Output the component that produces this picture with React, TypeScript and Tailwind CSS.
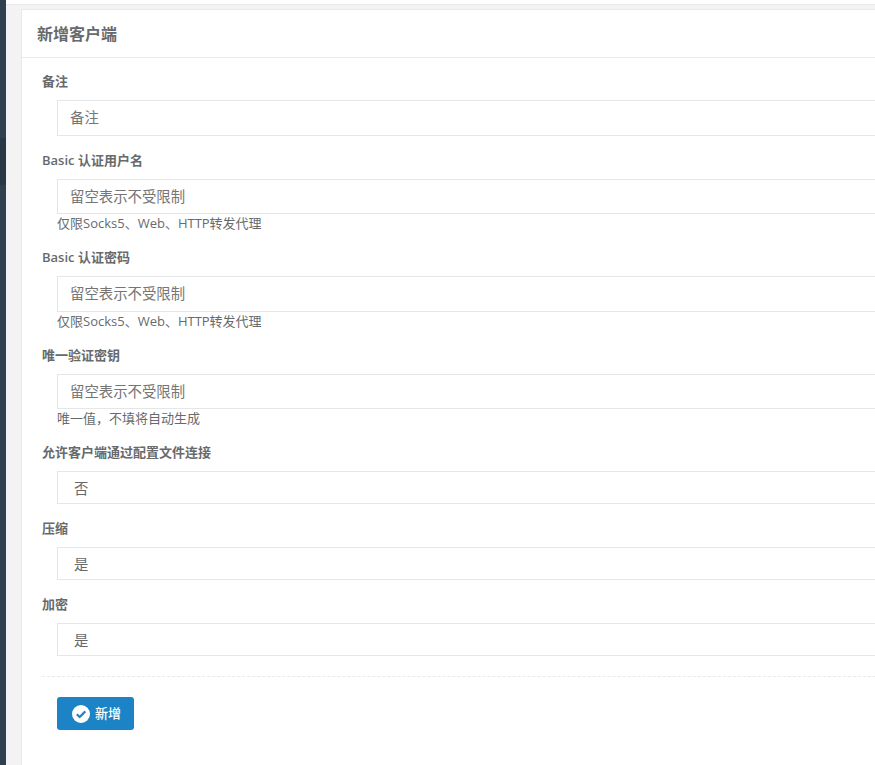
import React from "react";

const hint = "留空表示不受限制";
const proxyNote = "仅限Socks5、Web、HTTP转发代理";

const Label = ({ children }: { children: React.ReactNode }) => (
  <label className="block h-[18px] pl-5 text-[13px] leading-[17px] font-semibold text-[#676a6c]">
    {children}
  </label>
);

const TextField = ({
  label,
  placeholder,
  note,
  mt,
  tall,
}: {
  label: string;
  placeholder: string;
  note?: string;
  mt: string;
  tall?: boolean;
}) => (
  <div className={mt}>
    <Label>{label}</Label>
    <div className="mt-[9px] pl-[35px]">
      <div
        className={`w-[900px] border border-[#e5e6e7] bg-white px-3 text-[14.4px] leading-[33px] text-[#757575] ${tall ? "h-[36px]" : "h-[35px]"}`}
      >
        {placeholder}
      </div>
      {note && (
        <p className="h-[20px] text-[13px] leading-[18px] text-[#676a6c]">{note}</p>
      )}
    </div>
  </div>
);

const SelectField = ({ label, value, mt }: { label: string; value: string; mt: string }) => (
  <div className={mt}>
    <Label>{label}</Label>
    <div className="mt-[9px] pl-[35px]">
      <div className="h-[33px] w-[900px] border border-[#e5e6e7] bg-white pl-4 text-[14.4px] leading-[33px] text-[#676a6c]">
        {value}
      </div>
    </div>
  </div>
);

export default function App() {
  return (
    <div className="flex h-[765px] w-[875px] overflow-hidden bg-white font-['Open_Sans','Noto_Sans_CJK_SC',sans-serif]">
      <aside className="flex w-[6px] shrink-0 flex-col bg-[#2f4050]">
        <div className="mt-[138px] h-[47px] bg-[#293846]" />
      </aside>
      <main className="min-w-0 flex-1">
        <div className="h-[4px] bg-white" />
        <div className="h-[773px] border-t border-[#e7eaec] bg-[#f3f3f4] pt-[4px] pl-[15px]">
          <section className="h-[760px] w-[900px] border-l border-[#e7eaec] bg-white">
            <header className="flex h-[49px] items-center border-t border-b border-[#e7eaec] pl-[15px] text-[16px] font-semibold text-[#676a6c]">
              新增客户端
            </header>
            <div className="pt-[15px]">
              <TextField label="备注" placeholder="备注" mt="mt-0" tall />
              <TextField label="Basic 认证用户名" placeholder={hint} note={proxyNote} mt="mt-[16px]" />
              <TextField label="Basic 认证密码" placeholder={hint} note={proxyNote} mt="mt-[15px]" tall />
              <TextField label="唯一验证密钥" placeholder={hint} note="唯一值，不填将自动生成" mt="mt-[15px]" />
              <SelectField label="允许客户端通过配置文件连接" value="否" mt="mt-[15px]" />
              <SelectField label="压缩" value="是" mt="mt-[16px]" />
              <SelectField label="加密" value="是" mt="mt-[16px]" />
              <div className="mt-[20px] ml-5 border-t border-dashed border-[#e7eaec]" />
              <div className="mt-[20px] pl-[35px]">
                <button className="flex h-[33px] w-[77px] items-center gap-[5px] rounded-[3px] bg-[#1c84c6] pl-[15px] text-[13px] font-medium text-white">
                  <svg viewBox="0 0 18 18" className="size-[18px] shrink-0">
                    <circle cx="9" cy="9" r="9" fill="#fff" />
                    <path d="M4.8 9.2 7.7 12l5.6-5.6" fill="none" stroke="#1c84c6" strokeWidth="2.2" />
                  </svg>
                  新增
                </button>
              </div>
            </div>
          </section>
        </div>
      </main>
    </div>
  );
}
